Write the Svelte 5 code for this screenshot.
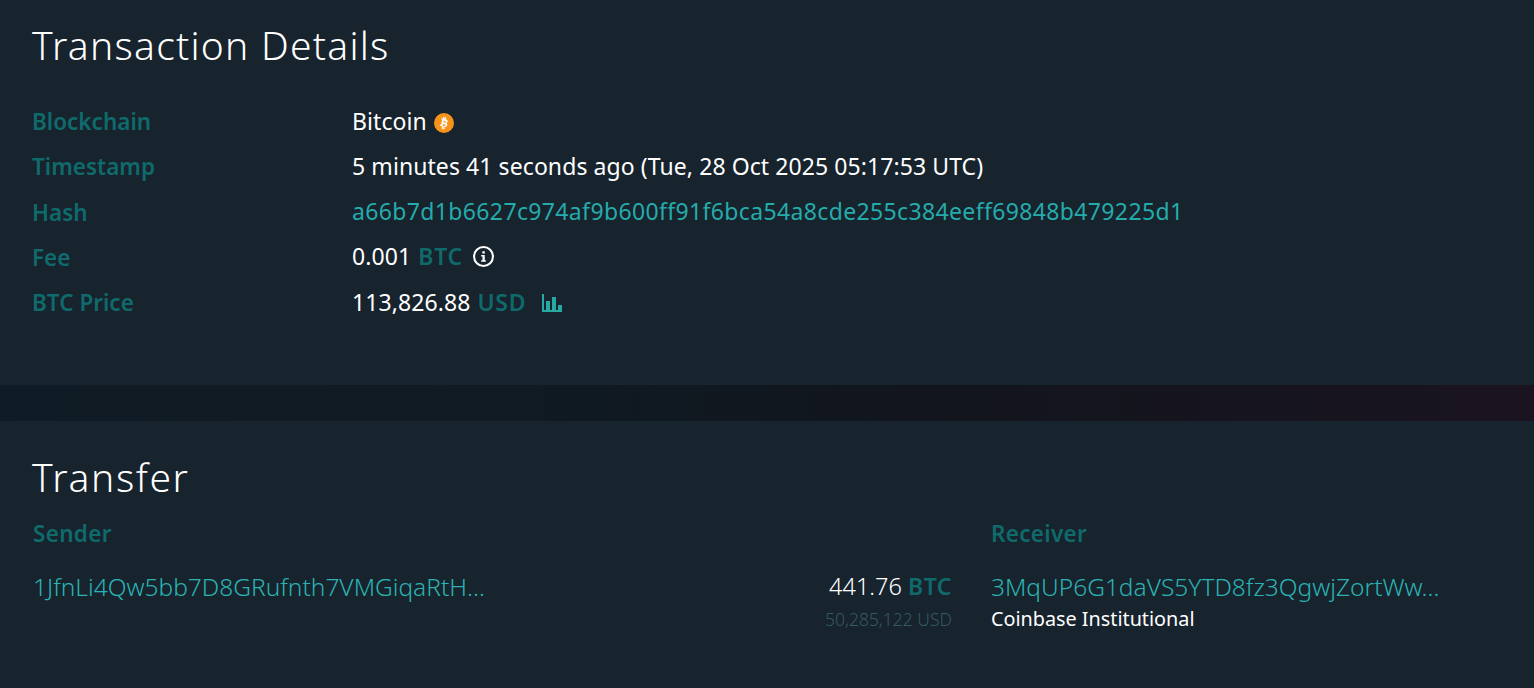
<script>
  const rows = [
    { label: "Blockchain", kind: "chain", value: "Bitcoin" },
    { label: "Timestamp", kind: "text", value: "5 minutes 41 seconds ago (Tue, 28 Oct 2025 05:17:53 UTC)" },
    { label: "Hash", kind: "link", value: "a66b7d1b6627c974af9b600ff91f6bca54a8cde255c384eeff69848b479225d1" },
    { label: "Fee", kind: "fee", value: "0.001", unit: "BTC" },
    { label: "BTC Price", kind: "price", value: "113,826.88", unit: "USD" },
  ];
</script>

<main>
  <section class="details">
    <h1>Transaction Details</h1>
    <div class="rows">
      {#each rows as row}
        <div class="row">
          <div class="label">{row.label}</div>
          <div class="value" class:link={row.kind === "link"}>
            <span>{row.value}</span>
            {#if row.unit}<span class="unit">{row.unit}</span>{/if}
            {#if row.kind === "chain"}
              <svg class="coin" viewBox="0 0 20 20" width="20" height="20">
                <circle cx="10" cy="10" r="10" fill="#f7931a" />
                <path d="M7.600 5.400l4 .9c1.500.4 2.100 1.300 1.800 2.400-.2.8-.8 1.200-1.400 1.300.9.4 1.300 1.100 1 2.200-.4 1.400-1.600 1.900-3.300 1.500l-3.700-.9.4-1.300.8.2 1.400-5.100-.8-.2zM9.700 7.500l-.5 1.900 1.500.4c.7.2 1.200 0 1.300-.6.2-.6-.2-1-.9-1.200zM8.900 10.700l-.6 2.100 1.700.4c.8.2 1.300 0 1.500-.7.2-.6-.2-1.100-1-1.300zM9.500 4l.9.2-.4 1.600-.9-.2zM11.100 4.400l.9.2-.4 1.600-.9-.2zM8.100 14l.9.2-.4 1.600-.9-.2zM9.700 14.400l.9.2-.4 1.600-.9-.2z" fill="#fff" stroke="#fff" stroke-width="0.4" />
              </svg>
            {/if}
            {#if row.kind === "fee"}
              <svg class="info" viewBox="0 0 20 20" width="21" height="21">
                <circle cx="10" cy="10" r="9" fill="none" stroke="#fff" stroke-width="2" />
                <path d="M7.800 8.600h3.400v5h1v1.400H7.800v-1.400h1.200v-3.600H7.800z" fill="#fff" />
                <rect x="8.900" y="5" width="2.300" height="2.200" fill="#fff" />
              </svg>
            {/if}
            {#if row.kind === "price"}
              <svg class="chart" viewBox="0 0 20 18" width="20" height="18">
                <path d="M0 0h2v16h18v2H0zM4 7h4v9H4zM10 3h4v13h-4zM16 11h4v5h-4z" fill="#27a9a4" />
              </svg>
            {/if}
          </div>
        </div>
      {/each}
    </div>
  </section>

  <div class="divider"></div>

  <section class="transfer">
    <h1>Transfer</h1>
    <div class="parties">
      <div class="party">
        <div class="label">Sender</div>
        <div class="address">1JfnLi4Qw5bb7D8GRufnth7VMGiqaRtH…</div>
      </div>
      <div class="amount">
        <div class="btc">441.76 <span class="unit">BTC</span></div>
        <div class="usd">50,285,122 USD</div>
      </div>
      <div class="party receiver">
        <div class="label">Receiver</div>
        <div class="address">3MqUP6G1daVS5YTD8fz3QgwjZortWw…</div>
        <div class="owner">Coinbase Institutional</div>
      </div>
    </div>
  </section>
</main>

<style>
  :global(body) {
    margin: 0;
    background: #17232d;
  }

  main {
    width: 1534px;
    height: 688px;
    overflow: hidden;
    font-family: "Noto Sans", "Open Sans", sans-serif;
    color: #fff;
    background: #17232d;
  }

  h1 {
    margin: 0;
    font-size: 39px;
    font-weight: 300;
    line-height: 46px;
    letter-spacing: 1.25px;
  }

  .details {
    height: 385px;
    box-sizing: border-box;
    padding: 22px 32px 0;
  }

  .rows {
    margin-top: 30px;
    display: flex;
    flex-direction: column;
  }

  .row {
    display: flex;
    align-items: center;
    height: 45.25px;
  }

  .label {
    color: #0f6a6c;
    font-size: 22.5px;
    font-weight: 600;
  }

  .row .label {
    width: 320px;
    padding-top: 2px;
  }

  .value {
    display: flex;
    align-items: center;
    gap: 7px;
    font-size: 23px;
    letter-spacing: 0.08px;
  }

  .value.link {
    color: #25abab;
    letter-spacing: 0.36px;
  }

  .unit {
    color: #0f6a6c;
    font-weight: 600;
    letter-spacing: 0.8px;
  }

  .coin {
    margin-top: 4px;
  }

  .info {
    margin-left: 3px;
  }

  .chart {
    margin-left: 9px;
    margin-top: 2px;
  }

  .divider {
    height: 36px;
    background: linear-gradient(90deg, #101c25, #0f1a23 35%, #12151d 60%, #1a1420);
  }

  .transfer {
    padding: 33px 32px 0;
  }

  .transfer h1 {
    letter-spacing: 1.6px;
  }

  .parties {
    display: flex;
    margin-top: 18px;
  }

  .party {
    width: 460px;
    padding-left: 1px;
  }

  .party .label {
    letter-spacing: 0.3px;
  }

  .address {
    margin-top: 21px;
    font-size: 24.5px;
    font-weight: 300;
    color: #2bb3b3;
    white-space: nowrap;
  }

  .amount {
    width: 459px;
    padding-top: 52px;
    text-align: right;
  }

  .btc {
    font-size: 23.5px;
    font-weight: 300;
  }

  .btc .unit {
    font-size: 23px;
    letter-spacing: 0.5px;
  }

  .usd {
    margin-top: 5px;
    font-size: 17.5px;
    font-weight: 300;
    color: #345a62;
  }

  .receiver {
    margin-left: 38px;
  }

  .owner {
    margin-top: 2px;
    font-size: 19.8px;
  }
</style>
